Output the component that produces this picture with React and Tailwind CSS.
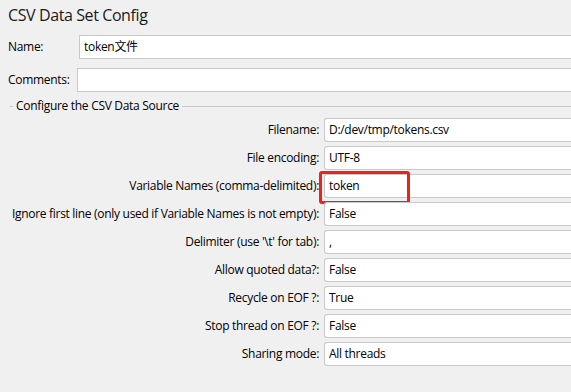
const rows = [
  { label: 'Filename:', value: 'D:/dev/tmp/tokens.csv' },
  { label: 'File encoding:', value: 'UTF-8' },
  { label: 'Variable Names (comma-delimited):', value: 'token', marked: true },
  { label: 'Ignore first line (only used if Variable Names is not empty):', value: 'False' },
  { label: "Delimiter (use '\\t' for tab):", value: ',' },
  { label: 'Allow quoted data?:', value: 'False' },
  { label: 'Recycle on EOF ?:', value: 'True' },
  { label: 'Stop thread on EOF ?:', value: 'False' },
  { label: 'Sharing mode:', value: 'All threads' },
];

function Field({ value, marked }) {
  return (
    <div className="relative h-[24px] flex-1 flex items-center rounded-l-[3px] border border-r-0 border-[#c9c9c9] bg-white pl-[4px] text-[12px] text-black">
      {value}
      {marked && (
        <div className="absolute left-[-6px] top-[-4px] h-[33px] w-[91px] rounded-[3px] border-[3px] border-[#f0201a]" />
      )}
    </div>
  );
}

export default function App() {
  return (
    <div
      className="w-[571px] h-[392px] overflow-hidden bg-[#f0f0f0] text-black tracking-[-0.3px]"
      style={{ fontFamily: '"Open Sans", "Noto Sans CJK SC", sans-serif' }}
    >
      <div className="h-[35px] pl-[8px] pt-[5px] text-[16px] leading-[20px] text-[#1a1a1a] tracking-[-0.4px]">
        CSV Data Set Config
      </div>

      <div className="flex items-center h-[24px]">
        <div className="w-[79px] pl-[8px] text-[12px]">Name:</div>
        <div className="flex-1 h-[24px] flex items-center border-y border-l border-[#c9c9c9] bg-white pl-[4px] text-[12px]">
          token文件
        </div>
      </div>

      <div className="flex items-center h-[24px] mt-[9px]">
        <div className="w-[77px] pl-[8px] text-[12px]">Comments:</div>
        <div className="flex-1 h-[24px] border-y border-l border-[#c9c9c9] bg-white" />
      </div>

      <div className="flex items-center h-[14px] mt-[7px] text-[12px]">
        <div className="w-[3px] ml-[10px] h-px bg-[#c9c9c9]" />
        <span className="px-[3px] leading-[14px]">Configure the CSV Data Source</span>
        <div className="flex-1 h-px bg-[#c9c9c9]" />
      </div>

      <div className="mt-[5px] flex flex-col gap-[4px]">
        {rows.map((r) => (
          <div key={r.label} className="flex items-center">
            <div className="w-[324px] pr-[5px] text-right text-[12px] whitespace-nowrap">{r.label}</div>
            <Field value={r.value} marked={r.marked} />
          </div>
        ))}
      </div>
    </div>
  );
}
